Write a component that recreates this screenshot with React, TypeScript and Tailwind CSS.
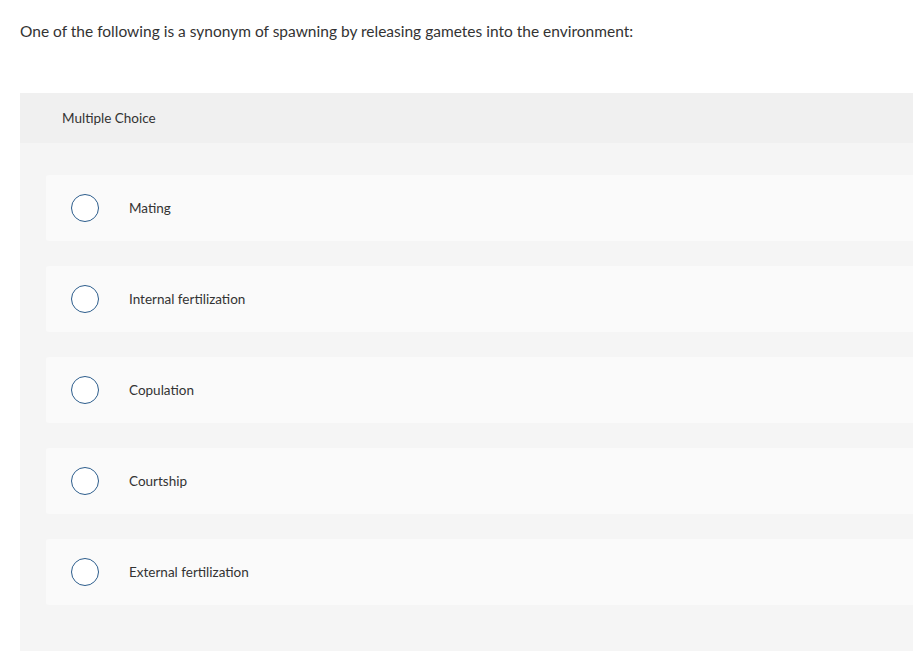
import { useState } from 'react';

const OPTIONS = [
  'Mating',
  'Internal fertilization',
  'Copulation',
  'Courtship',
  'External fertilization',
];

export default function App() {
  const [selected, setSelected] = useState<number | null>(null);

  return (
    <main
      className="h-[651px] overflow-hidden bg-white pl-5"
      style={{ fontFamily: '"Lato", "Liberation Sans", sans-serif' }}
    >
      <p className="pt-[21px] text-[15.5px] leading-5 text-[#333]">
        One of the following is a synonym of spawning by releasing gametes into the environment:
      </p>

      <section className="mt-[52px] bg-[#f5f5f5]">
        <div className="flex h-[50px] items-center bg-[#f0f0f0] pl-[42px] pt-px text-[13.5px] text-[#333]">
          Multiple Choice
        </div>

        <div className="flex flex-col gap-[25px] pl-[26px] pt-8 pb-20">
          {OPTIONS.map((opt, i) => (
            <button
              key={opt}
              onClick={() => setSelected(i)}
              className="flex h-[66px] items-center rounded-l-[3px] bg-[#fafafa] pl-[25px] text-left"
            >
              <span className="flex h-7 w-7 flex-shrink-0 items-center justify-center rounded-full border-[1.5px] border-[#2c5d8c] bg-white">
                {selected === i && <span className="h-3.5 w-3.5 rounded-full bg-[#2c5d8c]" />}
              </span>
              <span className="ml-[30px] pt-px text-[13.5px] text-[#333]">{opt}</span>
            </button>
          ))}
        </div>
      </section>
    </main>
  );
}
